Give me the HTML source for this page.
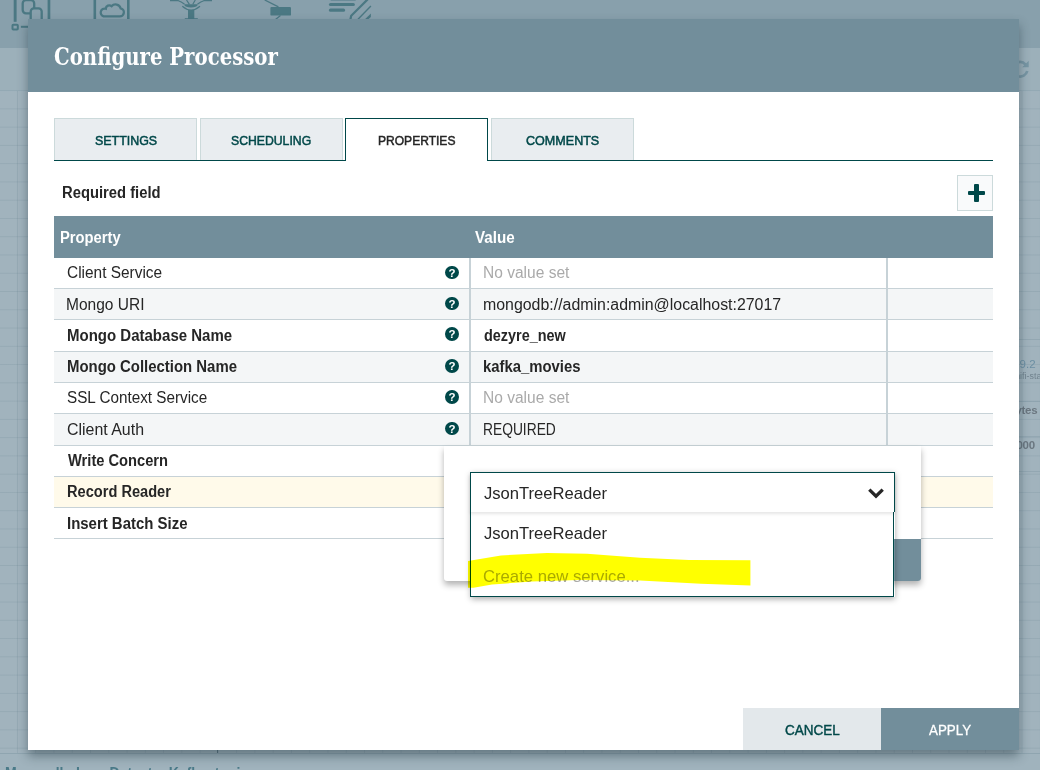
<!DOCTYPE html>
<html lang="en">
<head>
<meta charset="utf-8">
<title>Configure Processor</title>
<style>
*{box-sizing:border-box;margin:0;padding:0}
html,body{width:1040px;height:770px;overflow:hidden}
body{position:relative;font-family:"Liberation Sans",sans-serif;color:#262626;background:#a8b9c1}
body>*{position:absolute}
.t{position:absolute;white-space:nowrap;transform-origin:0 0;display:block}
/* ---------- dimmed application behind the dialog ---------- */
#topbar{left:0;top:0;width:1040px;height:48px;background:#88a0ac}
#statusbar{left:0;top:48px;width:1040px;height:43px;background:#9cb0ba;border-bottom:1.5px solid #93a9b4}
#canvas{left:0;top:91px;width:1040px;height:662.5px;background-color:#a1b3bd;
  background-image:linear-gradient(to right,rgba(120,145,158,.28) 1.2px,transparent 1.2px),linear-gradient(to bottom,rgba(120,145,158,.28) 1.2px,transparent 1.2px);
  background-size:18.27px 18.27px;background-position:-1.3px -0.9px;border-bottom:1.5px solid #8fa5b0}
#crumbs{left:0;top:753.5px;width:1040px;height:16.5px;background:#a0b3bd;overflow:hidden}
#crumbs span{position:absolute;left:4.8px;top:10.6px;font-weight:bold;font-size:15.6px;line-height:20px;color:#4a7a88;white-space:nowrap;transform-origin:0 0;transform:scaleX(.9)}
.pl{left:1019px;width:21px;height:1.2px;background:rgba(120,145,158,.35)}
.bgt{white-space:nowrap;line-height:14px}
#icons{left:0;top:0;width:1040px;height:48px;overflow:visible}
/* ---------- dialog ---------- */
#dialog{left:28px;top:19px;width:991px;height:730.5px;background:#fff;box-shadow:0 6px 10px rgba(20,40,50,.42)}
#dlghead{left:28px;top:19px;width:991px;height:72.5px;background:#728e9b}
.tab{top:118px;width:143px;height:42px;background:#e9edf0;border:1px solid #ccdadb;border-bottom:0}
.tab.sel{background:#fff;border:1.3px solid #004849;border-bottom:0;height:43.4px}
#tabline{left:54px;top:159.7px;width:939px;height:1.3px;background:#004849}
#plus{left:957px;top:175px;width:36px;height:36px;border:1px solid #ccdadb;background:#f9fafb}
#plus i{position:absolute;background:#004849;border-radius:1px}
#thead{left:54px;top:216px;width:939px;height:42px;background:#728e9b}
.row{left:54px;width:939px;background:#fff}
.row.alt{background:#f4f6f7}
.row.hl{background:#fffaea}
.hline{left:54px;width:939px;height:1.3px;background:#c7d2d7}
.vline{width:1.5px;background:#c7d2d7;top:257.5px;height:188px}
.q{left:445.2px;width:13.8px;height:13.8px;border-radius:50%;background:#004849;color:#fff;font-weight:bold;font-size:11.5px;line-height:14.2px;text-align:center}
.btn{top:708px;height:41.5px}
#cancel{left:743px;width:138px;background:#e3e8eb}
#apply{left:881px;width:138px;background:#728e9b}
/* ---------- property editor popup ---------- */
#editor{left:443.8px;top:446px;width:477.2px;height:134.8px;background:#fff;box-shadow:0 4px 6px rgba(0,0,0,.3);border-radius:0 0 3px 3px}
#okbtn{left:800px;top:538.6px;width:121px;height:42.2px;background:#728e9b;border-radius:0 0 3px 0}
#options{left:470.4px;top:511.6px;width:424px;height:85.7px;background:#fff;border:1.3px solid #004849;border-top:0}
#ddshadow{left:470.6px;top:472.4px;width:424px;height:124.7px;box-shadow:0 2px 6px rgba(0,0,0,.34)}
#combo{left:470.4px;top:472px;width:424.6px;height:40px;background:#fff;border:1.3px solid #004849;border-bottom:0;box-shadow:0 2px 3px rgba(0,0,0,.1)}
#chev{left:864px;top:484px;width:24px;height:18px}
#hilite{left:0;top:0;width:1040px;height:770px;mix-blend-mode:multiply;pointer-events:none}
</style>
</head>
<body>
<div id="topbar"></div>
<div id="statusbar"></div>
<div id="canvas"></div>
<div id="crumbs"><span>Mongodb_Log_Data_to_Kafka_topic</span></div>
<svg id="icons" viewBox="0 0 1040 48" fill="none" stroke="#4b7883" stroke-width="1.8">
<g fill="#4b7883" stroke="none">
<rect x="13.7" y="0" width="2.9" height="21.8"/><rect x="47.6" y="0" width="2.7" height="19"/><rect x="20.9" y="25.8" width="7.2" height="2"/>
<rect x="93.5" y="0" width="2.6" height="19"/><rect x="127" y="0" width="2.6" height="19"/>
<rect x="188" y="10" width="6.3" height="9"/><rect x="184.8" y="18.2" width="13" height="1"/>
<path d="M184.5 4.3 H197.5 V5.2 A6.5 2.2 0 0 1 184.5 5.2 Z"/>
<rect x="270.4" y="6.9" width="20.6" height="8.7" rx="1.2"/>
<rect x="328.9" y="2.9" width="26" height="3.2" rx="1.6"/><rect x="328.9" y="8.5" width="16.2" height="3.3" rx="1.6"/>
<rect x="330.7" y="0" width="25" height="0.8" opacity=".6"/>
<path d="M370.9 13.4 V17 L368.6 19 H365.2 Z"/>
</g>
<rect x="12.5" y="24.8" width="5.3" height="4.8" rx="0.8" stroke-width="2"/>
<rect x="22.7" y="0.2" width="11.5" height="13.1" rx="3.2" stroke-width="2.3"/>
<rect x="30.7" y="8.3" width="11" height="14" rx="3.2" fill="#88a0ac" stroke-width="2.3"/>
<path d="M103.6 16.4 H119.4 A4.1 4.1 0 0 0 120.6 8.3 A5.3 5.3 0 0 0 111.6 6.2 A3.5 3.5 0 0 0 105.8 8.7 A3.95 3.95 0 0 0 103.6 16.4 Z" stroke-width="2.3"/>
<g stroke-width="1.2">
<path d="M182.3 6.3 Q191 14 200 6.3"/>
<path d="M170 0.7 H178.4 Q181 1.6 184.6 4.2 M212 0.7 H203.8 Q201 1.6 197.4 4.2 M186.5 0 L189.4 4.3 M195.3 0 L192.8 4.3"/>
<path d="M264.7 0 L278.4 6.9 M280.5 15.6 L275.5 19.4" stroke-width="1.3"/>
</g>
<path d="M367.6 -0.6 L351.2 15.8 L350.4 19.5" stroke-width="2.2"/>
<path d="M370.9 6 L358 19.2" stroke-width="1.4"/>
<path d="M1018 62.3 A7.4 7.4 0 0 1 1025.6 64.6 M1027.3 71 A7.4 7.4 0 0 1 1018 76.2" stroke="#7896a4" stroke-width="2.7"/>
<path d="M1028.7 60.8 V67.3 H1022.2 Z" fill="#7896a4" stroke="none"/>
</svg>

<div class="pl" style="top:338.5px"></div><div class="pl" style="top:400.8px"></div><div class="pl" style="top:436px"></div><div class="pl" style="top:471px"></div>
<span class="bgt" style="left:1010px;top:357px;font-size:11.5px;color:#6c8fa3">1.9.2</span>
<span class="bgt" style="left:1015.2px;top:369px;font-size:8.9px;color:#71838e">nifi-standard-nar</span>
<span class="bgt" style="left:1000px;top:403.3px;font-size:11.5px;letter-spacing:-.35px;font-weight:bold;color:#6b7780">0 bytes</span>
<span class="bgt" style="left:970px;top:437.6px;letter-spacing:-.3px;font-size:11.5px;font-weight:bold;color:#6b7780">00:00:00.000</span>
<div style="left:216.5px;top:738px;width:1.4px;height:15px;background:#5f7884"></div>
<span class="bgt" style="left:228px;top:738px;font-size:11.7px;color:#5d6e78"><b>Tasks/Time</b> 0 / 00:00:00.000</span>
<span class="bgt" style="left:494px;top:738px;font-size:11.7px;color:#7893a2">5 min</span>
<div id="dialog"></div>
<div id="dlghead"></div>
<div class="tab" style="left:54px"></div>
<div class="tab" style="left:200px"></div>
<div class="tab" style="left:491px"></div>
<div id="tabline"></div>
<div class="tab sel" style="left:345px"></div>
<div id="plus"><i style="left:9.6px;top:14.6px;width:17.2px;height:4.8px"></i><i style="left:15.8px;top:8.4px;width:4.8px;height:17.2px"></i></div>
<div id="thead"></div>
<div class="row" style="top:257.7px;height:30.8px"></div>
<b class="q" style="top:265.7px">?</b>
<div class="row alt" style="top:288.5px;height:30.8px"></div>
<b class="q" style="top:296.5px">?</b>
<div class="row" style="top:319.3px;height:32.0px"></div>
<b class="q" style="top:327.3px">?</b>
<div class="row alt" style="top:351.3px;height:31.1px"></div>
<b class="q" style="top:359.3px">?</b>
<div class="row" style="top:382.4px;height:31.1px"></div>
<b class="q" style="top:390.4px">?</b>
<div class="row alt" style="top:413.5px;height:31.9px"></div>
<b class="q" style="top:421.5px">?</b>
<div class="row" style="top:445.4px;height:31.0px"></div>
<div class="row hl" style="top:476.4px;height:30.9px"></div>
<div class="row" style="top:507.3px;height:31.4px"></div>
<div class="hline" style="top:287.8px"></div>
<div class="hline" style="top:318.6px"></div>
<div class="hline" style="top:350.6px"></div>
<div class="hline" style="top:381.6px"></div>
<div class="hline" style="top:412.8px"></div>
<div class="hline" style="top:444.6px"></div>
<div class="hline" style="top:475.6px"></div>
<div class="hline" style="top:506.6px"></div>
<div class="hline" style="top:538.0px"></div>
<div class="vline" style="left:469px"></div>
<div class="vline" style="left:886px"></div>
<div id="cancel" class="btn"></div>
<div id="apply" class="btn"></div>
<span class="t" style="left:54.41px;top:42.10px;font-size:23.7px;line-height:30px;color:#fff;transform:scaleX(0.9241);font-weight:bold;font-family:'DejaVu Serif Condensed','DejaVu Serif','Liberation Serif',serif">Configure Processor</span>
<span class="t" style="left:94.52px;top:133.30px;font-size:13px;line-height:16px;color:#004849;transform:scaleX(0.9562);-webkit-text-stroke:0.5px #004849">SETTINGS</span>
<span class="t" style="left:231.28px;top:133.30px;font-size:13px;line-height:16px;color:#004849;transform:scaleX(0.9403);-webkit-text-stroke:0.5px #004849">SCHEDULING</span>
<span class="t" style="left:377.87px;top:133.30px;font-size:13px;line-height:16px;color:#262626;transform:scaleX(0.9268);-webkit-text-stroke:0.5px #262626">PROPERTIES</span>
<span class="t" style="left:525.62px;top:133.30px;font-size:13px;line-height:16px;color:#004849;transform:scaleX(0.9659);-webkit-text-stroke:0.5px #004849">COMMENTS</span>
<span class="t" style="left:61.55px;top:182.99px;font-size:15.6px;line-height:20px;color:#262626;transform:scaleX(0.9480);font-weight:bold">Required field</span>
<span class="t" style="left:59.65px;top:228.29px;font-size:15.6px;line-height:20px;color:#fff;transform:scaleX(0.9460);font-weight:bold">Property</span>
<span class="t" style="left:475.00px;top:228.29px;font-size:15.6px;line-height:20px;color:#fff;transform:scaleX(0.9739);font-weight:bold">Value</span>
<span class="t" style="left:66.86px;top:263.09px;font-size:15.6px;line-height:20px;color:#262626;transform:scaleX(0.9889)">Client Service</span>
<span class="t" style="left:66.36px;top:294.99px;font-size:15.6px;line-height:20px;color:#262626;transform:scaleX(0.9954)">Mongo URI</span>
<span class="t" style="left:66.64px;top:326.19px;font-size:15.6px;line-height:20px;color:#262626;transform:scaleX(0.9624);font-weight:bold">Mongo Database Name</span>
<span class="t" style="left:66.64px;top:356.89px;font-size:15.6px;line-height:20px;color:#262626;transform:scaleX(0.9572);font-weight:bold">Mongo Collection Name</span>
<span class="t" style="left:66.87px;top:387.99px;font-size:15.6px;line-height:20px;color:#262626;transform:scaleX(0.9782)">SSL Context Service</span>
<span class="t" style="left:66.83px;top:419.89px;font-size:15.6px;line-height:20px;color:#262626;transform:scaleX(1.0210)">Client Auth</span>
<span class="t" style="left:67.60px;top:451.09px;font-size:15.6px;line-height:20px;color:#262626;transform:scaleX(0.9412);font-weight:bold">Write Concern</span>
<span class="t" style="left:66.66px;top:482.09px;font-size:15.6px;line-height:20px;color:#262626;transform:scaleX(0.9367);font-weight:bold">Record Reader</span>
<span class="t" style="left:66.64px;top:513.79px;font-size:15.6px;line-height:20px;color:#262626;transform:scaleX(0.9586);font-weight:bold">Insert Batch Size</span>
<span class="t" style="left:482.95px;top:263.09px;font-size:15.6px;line-height:20px;color:#aaa;transform:scaleX(0.9965)">No value set</span>
<span class="t" style="left:483.18px;top:294.99px;font-size:15.6px;line-height:20px;color:#262626;transform:scaleX(1.0198)">mongodb://admin:admin@localhost:27017</span>
<span class="t" style="left:483.74px;top:326.19px;font-size:15.6px;line-height:20px;color:#262626;transform:scaleX(0.9250);font-weight:bold">dezyre_new</span>
<span class="t" style="left:483.25px;top:356.89px;font-size:15.6px;line-height:20px;color:#262626;transform:scaleX(0.9529);font-weight:bold">kafka_movies</span>
<span class="t" style="left:482.95px;top:387.99px;font-size:15.6px;line-height:20px;color:#aaa;transform:scaleX(0.9965)">No value set</span>
<span class="t" style="left:483.09px;top:419.89px;font-size:15.6px;line-height:20px;color:#262626;transform:scaleX(0.8845)">REQUIRED</span>
<span class="t" style="left:784.72px;top:721.27px;font-size:14.8px;line-height:18px;color:#004849;transform:scaleX(0.9123);-webkit-text-stroke:0.45px #004849">CANCEL</span>
<span class="t" style="left:929.00px;top:721.27px;font-size:14.8px;line-height:18px;color:#fff;transform:scaleX(0.9038);-webkit-text-stroke:0.3px #fff">APPLY</span>

<div id="editor"></div>
<div id="okbtn"><span style="position:absolute;left:0;right:0;top:0;line-height:42px;text-align:center;color:#fff;font-size:14.8px">OK</span></div>
<div id="ddshadow"></div>
<div id="options"></div>
<div id="combo"></div>
<svg id="chev" viewBox="0 0 24 18"><path d="M5.3 5.6 L12 12.2 L18.7 5.6" fill="none" stroke="#262626" stroke-width="3.3" stroke-linejoin="miter"/></svg>
<span class="t" style="left:483.95px;top:482.75px;font-size:16.6px;line-height:21px;color:#262626;transform:scaleX(1.0000)">JsonTreeReader</span>
<span class="t" style="left:483.95px;top:523.35px;font-size:16.6px;line-height:21px;color:#262626;transform:scaleX(1.0000)">JsonTreeReader</span>
<span class="t" style="left:483.45px;top:565.65px;font-size:16.6px;line-height:21px;color:#aaa;transform:scaleX(1.0049)">Create new service...</span>
<svg id="hilite" viewBox="0 0 1040 770"><path d="M468 561 L501 555.4 L547 553 L587 553.8 L640 557.8 L689 560 L750.4 560.3 L750.4 585.5 L701 583.7 L640 580.6 L578 580 L532 581.5 L492 584.6 L473.5 587.7 L468 587.7 Z" fill="#ffff00"/></svg>
</body>
</html>
